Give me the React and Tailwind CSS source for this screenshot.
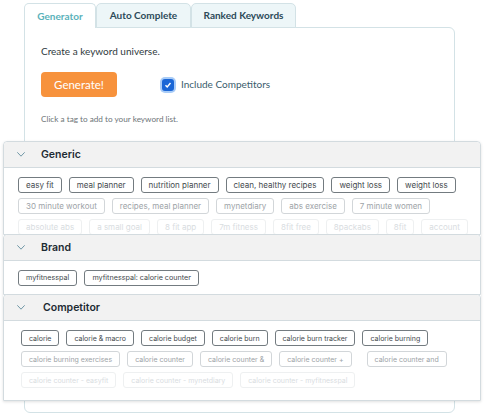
import React from 'react';

const generic = [
  ['easy fit', 'meal planner', 'nutrition planner', 'clean, healthy recipes', 'weight loss', 'weight loss'],
  ['30 minute workout', 'recipes, meal planner', 'mynetdiary', 'abs exercise', '7 minute women'],
  ['absolute abs', 'a small goal', '8 fit app', '7m fitness', '8fit free', '8packabs', '8fit', 'account'],
];

const brand = [['myfitnesspal', 'myfitnesspal: calorie counter']];

const competitor = [
  ['calorie', 'calorie & macro', 'calorie budget', 'calorie burn', 'calorie burn tracker', 'calorie burning'],
  ['calorie burning exercises', 'calorie counter', 'calorie counter &', 'calorie counter +', 'calorie counter and'],
  ['calorie counter - easyfit', 'calorie counter - mynetdiary', 'calorie counter - myfitnesspal'],
];

const rowStyles = [
  'border-[#737b80] text-[#43494d]',
  'border-[#d2d6d9] text-[#9da3a7]',
  'border-[#eef0f1] text-[#d9dddf]',
];

const Chevron = () => (
  <svg width="8" height="5" viewBox="0 0 8 5" fill="none" className="shrink-0">
    <path d="M0.6 0.6 4 4.2l3.4-3.6" stroke="#7097a6" strokeWidth="1" strokeLinecap="round" strokeLinejoin="round" />
  </svg>
);

const Section = ({ title, rows, height, pad = 'pl-[14px]', gap = 'ml-[16px]', size = 'text-[8px]' }) => (
  <div className="border border-[#d3dbdf] rounded-t-[4px] bg-white -mt-px first:mt-0">
    <div className="h-[26px] flex items-center bg-[#f2f2f2] border-b border-[#d3dbdf] pl-[13px] rounded-t-[4px]">
      <Chevron />
      <span className={`text-[10.5px] font-semibold text-[#1d2b33] ${gap}`}>{title}</span>
    </div>
    <div className={`${pad} pt-[9px] overflow-hidden ${height}`}>
      <div className="flex flex-col gap-[5px]">
        {rows.map((row, i) => (
          <div key={i} className="flex gap-[7px]">
            {row.map((t, j) => (
              <span
                key={j}
                className={`h-[16px] px-[7px] flex items-center whitespace-nowrap border rounded-[3px] leading-none ${size} ${rowStyles[i]} ${t === 'calorie counter and' ? 'ml-[8px]' : ''}`}
              >
                {t}
              </span>
            ))}
          </div>
        ))}
      </div>
    </div>
  </div>
);

export default function App() {
  return (
    <div className="relative w-[500px] h-[417px] bg-white overflow-hidden" style={{ fontFamily: 'Inter, "Noto Sans", sans-serif' }}>
      <div className="absolute left-[24px] top-[3px] w-[431px]" style={{ fontFamily: 'Lato, "Noto Sans", sans-serif' }}>
        <div className="flex items-end h-[25px] text-[10px] font-bold">
          <div className="h-[25px] w-[72px] flex items-center justify-center border border-b-0 border-[#d3e2e6] rounded-t-[5px] bg-white text-[#5ab2ba] relative z-10">
            Generator
          </div>
          <div className="h-[25px] w-[95px] flex items-center justify-center border border-[#d3e2e6] rounded-t-[5px] bg-[#edf6f8] text-[#2c4a58]">
            Auto Complete
          </div>
          <div className="h-[25px] w-[105px] flex items-center justify-center border border-[#d3e2e6] rounded-t-[5px] bg-[#edf6f8] text-[#2c4a58]">
            Ranked Keywords
          </div>
        </div>
        <div className="h-[386px] -mt-px border border-[#d3e2e6] rounded-b-[6px] rounded-tr-[6px] bg-white px-[16px] pt-[16px]">
          <p className="text-[10px] text-[#2f3a40]">Create a keyword universe.</p>
          <div className="flex items-center mt-[13px]">
            <button className="h-[25px] w-[76px] rounded-[4px] bg-[#f7923c] text-white text-[11.5px]">Generate!</button>
            <span className="ml-[45px] w-[12px] h-[12px] rounded-[3px] bg-[#1a66d6] ring-2 ring-[#a9ccf7] flex items-center justify-center">
              <svg width="8" height="8" viewBox="0 0 8 8"><path d="M1.5 4.2 3.2 6 6.5 2" stroke="white" strokeWidth="1.4" fill="none" /></svg>
            </span>
            <span className="ml-[7px] text-[10px] text-[#3a5c6c]">Include Competitors</span>
          </div>
          <p className="mt-[16px] text-[8.2px] text-[#6e7578]">Click a tag to add to your keyword list.</p>
        </div>
      </div>

      <div className="absolute left-[3px] top-[141px] w-[478px] shadow-[0_1px_3px_rgba(0,0,0,0.12)] rounded-t-[4px]">
        <Section title="Generic" rows={generic} height="h-[66px]" />
        <Section title="Brand" rows={brand} height="h-[33px]" size="text-[7.2px]" />
        <Section title="Competitor" rows={competitor} height="h-[79px]" pad="pl-[17px]" gap="ml-[18px]" size="text-[7px]" />
      </div>
    </div>
  );
}
